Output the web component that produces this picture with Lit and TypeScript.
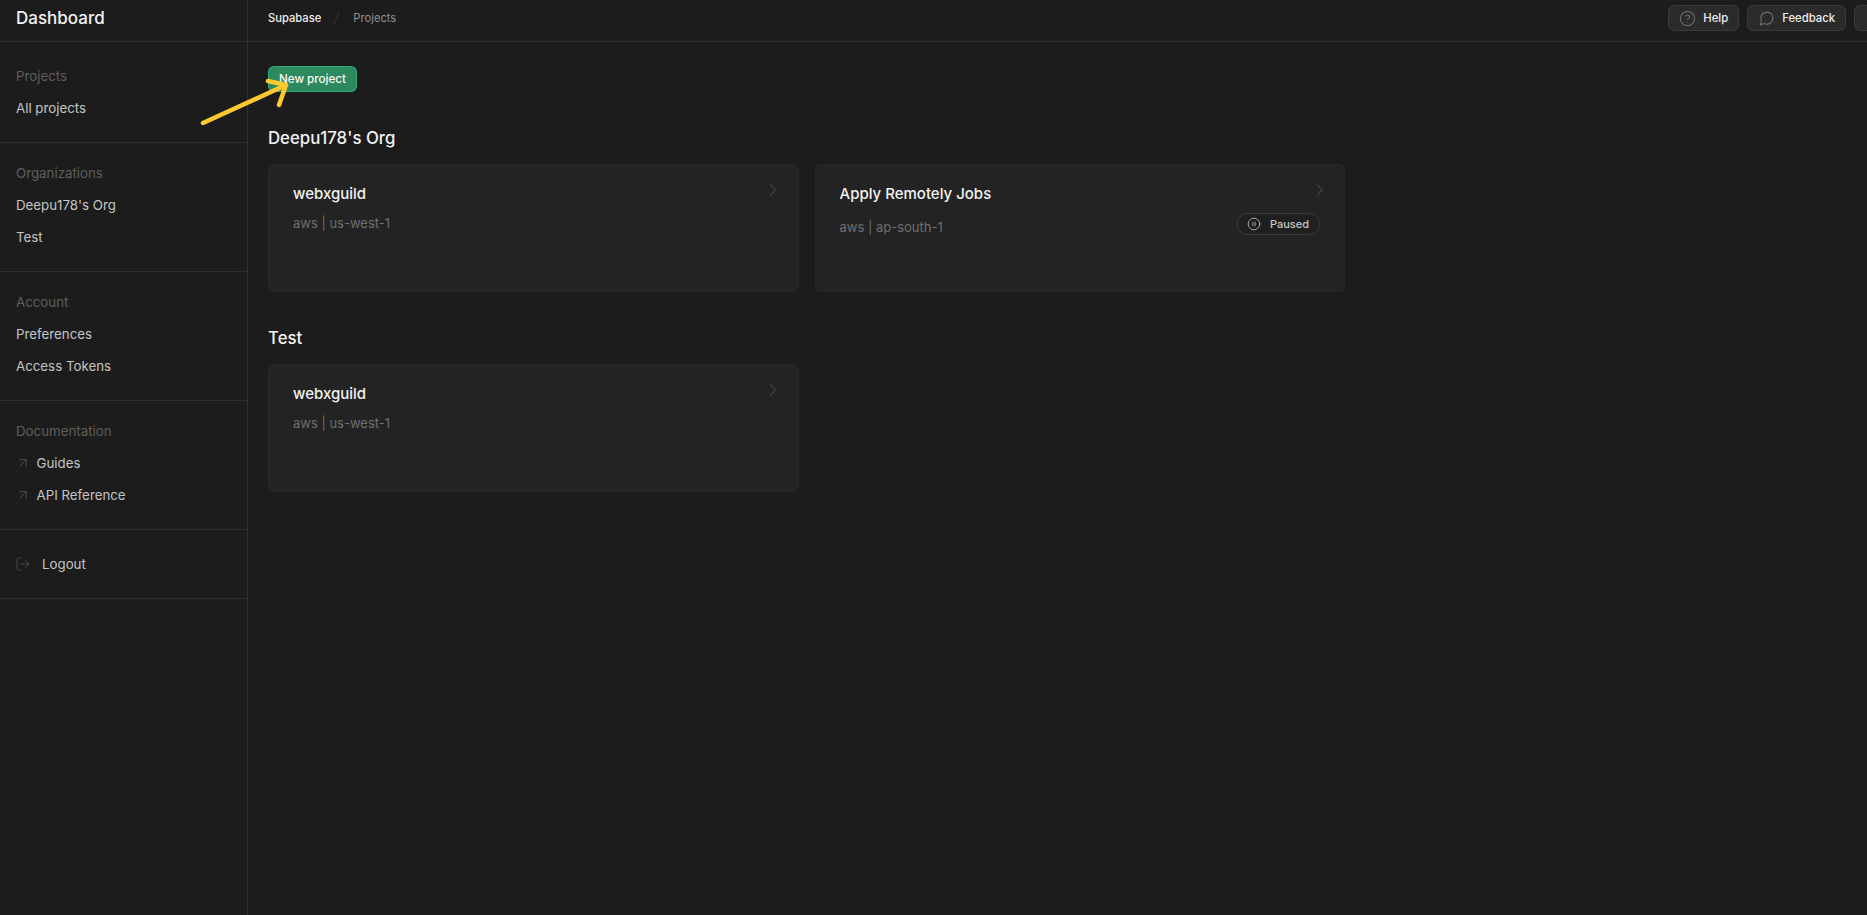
import { LitElement, css, html, svg } from 'lit';
import { customElement } from 'lit/decorators.js';

const icon = (body: unknown, size: number, sw = 1.5) => html`
  <svg width=${size} height=${size} viewBox="0 0 24 24" fill="none" stroke="currentColor"
       stroke-width=${sw} stroke-linecap="round" stroke-linejoin="round">${body}</svg>`;

const helpIcon = svg`<circle cx="12" cy="12" r="10"/><path d="M9.1 9a3 3 0 0 1 5.8 1c0 2-3 3-3 3"/><line x1="12" y1="17" x2="12" y2="17"/>`;
const chatIcon = svg`<path d="M21 11.5a8.4 8.4 0 0 1-.9 3.8 8.5 8.5 0 0 1-7.6 4.7 8.4 8.4 0 0 1-3.8-.9L3 21l1.9-5.7a8.4 8.4 0 0 1-.9-3.8 8.5 8.5 0 0 1 4.7-7.6 8.4 8.4 0 0 1 3.8-.9h.5a8.5 8.5 0 0 1 8 8v.5z"/>`;
const externalIcon = svg`<line x1="7" y1="17" x2="17" y2="7"/><polyline points="7 7 17 7 17 17"/>`;
const logoutIcon = svg`<path d="M9 21H5a2 2 0 0 1-2-2V5a2 2 0 0 1 2-2h4"/><polyline points="16 17 21 12 16 7"/><line x1="21" y1="12" x2="9" y2="12"/>`;
const chevronIcon = svg`<polyline points="9 18 15 12 9 6"/>`;
const pauseIcon = svg`<circle cx="12" cy="12" r="10"/><line x1="10" y1="9" x2="10" y2="15"/><line x1="14" y1="9" x2="14" y2="15"/>`;

interface Project {
  name: string;
  region: string;
  paused?: boolean;
}

const orgs: { name: string; projects: Project[] }[] = [
  {
    name: "Deepu178's Org",
    projects: [
      { name: 'webxguild', region: 'aws | us-west-1' },
      { name: 'Apply Remotely Jobs', region: 'aws | ap-south-1', paused: true },
    ],
  },
  { name: 'Test', projects: [{ name: 'webxguild', region: 'aws | us-west-1' }] },
];

const nav = [
  { label: 'Projects', items: ['All projects'], first: true },
  { label: 'Organizations', items: ["Deepu178's Org", 'Test'] },
  { label: 'Account', items: ['Preferences', 'Access Tokens'] },
  { label: 'Documentation', items: ['Guides', 'API Reference'], external: true },
];

@customElement('app-root')
export class AppRoot extends LitElement {
  static styles = css`
    :host {
      display: flex;
      position: relative;
      width: 100%;
      height: 915px;
      overflow: hidden;
      background: #1c1c1c;
      color: #ededed;
      font-family: Inter, "Liberation Sans", sans-serif;
    }

    .sidebar {
      flex: none;
      width: 247px;
      border-right: 1px solid #2e2e2e;
    }

    .brand {
      height: 36px;
      padding: 0 16px 5px;
      display: flex;
      align-items: center;
      border-bottom: 1px solid #2e2e2e;
      font-size: 17px;
      font-weight: 500;
      color: #f2f2f2;
    }

    .section {
      padding: 14px 16px 18px;
      border-bottom: 1px solid #2e2e2e;
    }

    .section.first,
    .section.logout {
      padding-top: 18px;
      padding-bottom: 18px;
    }

    .row {
      height: 32px;
      display: flex;
      align-items: center;
      font-size: 13.3px;
      color: #c4c4c4;
    }

    .row.label {
      color: #5e5e5e;
    }

    .row svg {
      flex: none;
      color: #555;
    }

    .row.ext svg {
      margin: 0 6px 0 -1.5px;
      color: #4a4a4a;
    }

    .row.out svg {
      margin: 0 11px 0 -1px;
    }

    .main {
      flex: 1;
      min-width: 0;
    }

    .topbar {
      display: flex;
      align-items: center;
      height: 36px;
      padding: 0 0 5px 20px;
      border-bottom: 1px solid #2e2e2e;
      font-size: 11.2px;
    }

    .crumb {
      font-weight: 500;
      color: #ededed;
    }

    .crumb.dim {
      font-weight: 400;
      color: #8f8f8f;
    }

    .slash {
      width: 1px;
      height: 14px;
      margin: 0 16px 0 15px;
      background: #333;
      transform: rotate(25deg);
    }

    .actions {
      margin-left: auto;
      margin-right: -17px;
      display: flex;
      gap: 8px;
    }

    .btn {
      display: flex;
      align-items: center;
      box-sizing: border-box;
      height: 26px;
      padding: 0 10px;
      gap: 7px;
      border: 1px solid #3b3b3b;
      border-radius: 6px;
      background: #2b2b2b;
      font-size: 11.3px;
      font-weight: 500;
      color: #ededed;
    }

    .btn svg {
      color: #707070;
    }

    .btn.cut {
      width: 30px;
    }

    .content {
      padding: 24px 20px;
    }

    .new {
      display: inline-flex;
      align-items: center;
      box-sizing: border-box;
      height: 26px;
      padding: 0 10px;
      border: 1px solid #3ecf8e80;
      border-radius: 6px;
      background: #2d8a60;
      font-size: 11.6px;
      font-weight: 500;
      color: #fafafa;
    }

    .org {
      margin-top: 33px;
    }

    .org h2 {
      margin: 0 0 13px;
      font-size: 16.8px;
      line-height: 26px;
      font-weight: 500;
      color: #f2f2f2;
    }

    .cards {
      display: grid;
      grid-template-columns: repeat(3, 530.5px);
      gap: 16px;
    }

    .card {
      box-sizing: border-box;
      height: 128px;
      padding: 18px 24px;
      display: flex;
      justify-content: space-between;
      border: 1px solid #282828;
      border-radius: 6px;
      background: #232323;
    }

    .name {
      font-size: 15px;
      line-height: 22px;
      font-weight: 500;
      color: #f2f2f2;
    }

    .region {
      margin-top: 8px;
      line-height: 20px;
      font-size: 13px;
      color: #6f6f6f;
    }

    .card.has-badge .region {
      margin-top: 12px;
    }

    .side {
      display: flex;
      flex-direction: column;
      align-items: flex-end;
    }

    .chevron {
      height: 20px;
      margin: -3px -9.5px 0 0;
      color: #5c5c5c;
    }

    .badge {
      display: flex;
      align-items: center;
      gap: 9px;
      box-sizing: border-box;
      height: 22px;
      margin-top: 13px;
      padding: 0 10px 0 9px;
      border: 1px solid #3b3b3b;
      border-radius: 11px;
      background: #1f1f1f;
      font-size: 11px;
      font-weight: 500;
      color: #c8c8c8;
    }

    .badge svg {
      color: #b5b5b5;
    }

    .arrow {
      position: absolute;
      left: 0;
      top: 0;
      pointer-events: none;
    }
  `;

  renderSection(s: (typeof nav)[number]) {
    return html`
      <div class="section ${s.first ? 'first' : ''}">
        <div class="row label">${s.label}</div>
        ${s.items.map(item => html`
          <div class="row ${s.external ? 'ext' : ''}">
            ${s.external ? icon(externalIcon, 16, 1.5) : ''}${item}
          </div>`)}
      </div>`;
  }

  renderCard(p: Project) {
    return html`
      <div class="card ${p.paused ? 'has-badge' : ''}">
        <div>
          <div class="name">${p.name}</div>
          <div class="region">${p.region}</div>
        </div>
        <div class="side">
          <span class="chevron">${icon(chevronIcon, 20, 1.1)}</span>
          ${p.paused ? html`<span class="badge">${icon(pauseIcon, 14)}Paused</span>` : ''}
        </div>
      </div>`;
  }

  render() {
    return html`
      <aside class="sidebar">
        <div class="brand">Dashboard</div>
        ${nav.map(s => this.renderSection(s))}
        <div class="section logout">
          <div class="row out">${icon(logoutIcon, 16, 1.2)}Logout</div>
        </div>
      </aside>
      <div class="main">
        <header class="topbar">
          <span class="crumb">Supabase</span>
          <span class="slash"></span>
          <span class="crumb dim">Projects</span>
          <div class="actions">
            <div class="btn">${icon(helpIcon, 17)}Help</div>
            <div class="btn">${icon(chatIcon, 17)}Feedback</div>
            <div class="btn cut"></div>
          </div>
        </header>
        <div class="content">
          <div class="new">New project</div>
          ${orgs.map(o => html`
            <section class="org">
              <h2>${o.name}</h2>
              <div class="cards">${o.projects.map(p => this.renderCard(p))}</div>
            </section>`)}
        </div>
      </div>
      <svg class="arrow" width="320" height="140" fill="none" stroke="#fdc92f" stroke-width="4.5"
           stroke-linecap="round" stroke-linejoin="round">
        <path d="M203 123L286 85M268 81L286 85L279 105"/>
      </svg>
    `;
  }
}
